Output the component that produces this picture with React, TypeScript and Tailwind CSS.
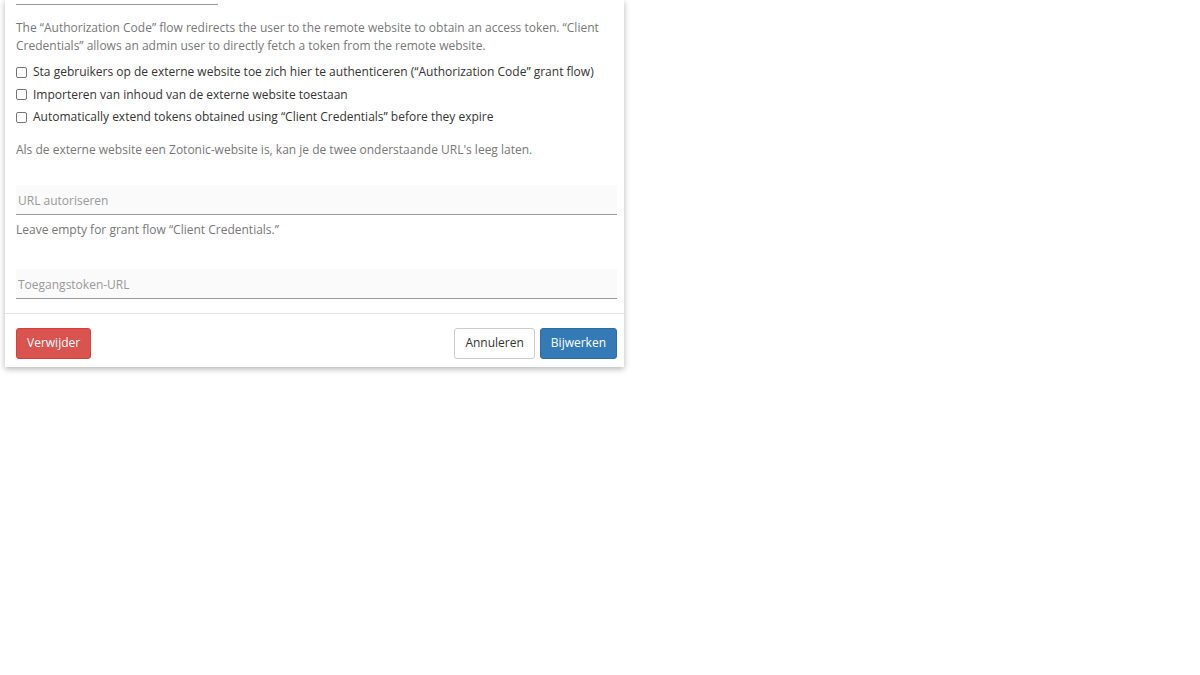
import React from "react";

const Check = ({ label }: { label: string }) => (
  <label className="flex items-center h-[22.5px] text-[12px] text-[#333]">
    <span className="w-[11px] h-[11px] border border-[#767676] rounded-[2px] bg-white mr-[6px] shrink-0" />
    {label}
  </label>
);

const Field = ({ placeholder }: { placeholder: string }) => (
  <div className="h-[30px] bg-[#fafafa] border-b border-[#999] flex items-center px-[2px] pt-[3px] text-[12px] text-[#999]">
    {placeholder}
  </div>
);

export default function App() {
  return (
    <div
      className="w-[1200px] h-[675px] bg-white overflow-hidden"
      style={{ fontFamily: "'Open Sans', Lato, sans-serif" }}
    >
      <div className="ml-[5px] w-[619px] bg-white shadow-[0_2px_6px_rgba(0,0,0,0.3)]">
        <div className="px-[11px] pr-[7px]">
          <div className="w-[202px] h-[5px] border-b border-[#999]" />
          <p className="mt-[14px] text-[12px] leading-[18px] text-[#777]">
            The “Authorization Code” flow redirects the user to the remote website to obtain an access token. “Client
            Credentials” allows an admin user to directly fetch a token from the remote website.
          </p>
          <div className="mt-[6px] flex flex-col">
            <Check label="Sta gebruikers op de externe website toe zich hier te authenticeren (“Authorization Code” grant flow)" />
            <Check label="Importeren van inhoud van de externe website toestaan" />
            <Check label="Automatically extend tokens obtained using “Client Credentials” before they expire" />
          </div>
          <p className="mt-[12px] text-[12px] leading-[18px] text-[#777]">
            Als de externe website een Zotonic-website is, kan je de twee onderstaande URL's leeg laten.
          </p>
          <div className="mt-[26px]">
            <Field placeholder="URL autoriseren" />
          </div>
          <p className="mt-[6px] text-[12px] leading-[18px] text-[#777]">
            Leave empty for grant flow “Client Credentials.”
          </p>
          <div className="mt-[30px] mb-[14px]">
            <Field placeholder="Toegangstoken-URL" />
          </div>
        </div>
        <div className="border-t border-[#e5e5e5] px-[11px] pr-[7px] pt-[14px] pb-[8px] flex items-center">
          <button className="h-[31px] px-[10px] rounded-[3px] bg-[#d9534f] border border-[#d43f3a] text-white text-[12px]">
            Verwijder
          </button>
          <div className="ml-auto flex gap-[5px]">
            <button className="h-[31px] px-[10px] rounded-[3px] bg-white border border-[#ccc] text-[#333] text-[12px]">
              Annuleren
            </button>
            <button className="h-[31px] px-[10px] rounded-[3px] bg-[#337ab7] border border-[#2e6da4] text-white text-[12px]">
              Bijwerken
            </button>
          </div>
        </div>
      </div>
    </div>
  );
}
